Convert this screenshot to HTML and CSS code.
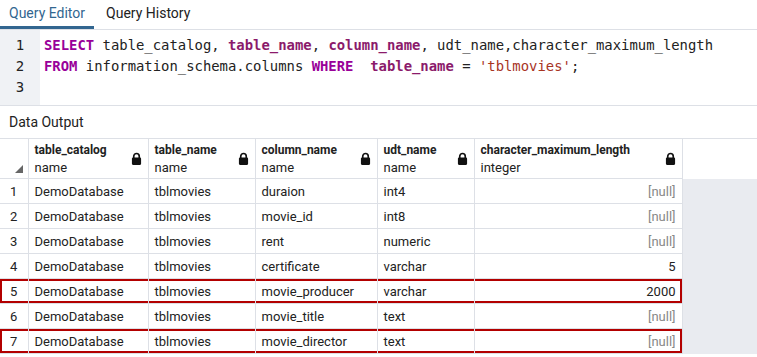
FILE: index.html
```html
<!DOCTYPE html>
<html lang="en">
<head>
    <meta charset="UTF-8">
    <title>Query Tool</title>
    <link rel="stylesheet" href="styles.css">
</head>
<body>
    <div class="tabs">
        <div class="tab active">Query Editor</div>
        <div class="tab">Query History</div>
    </div>

    <div class="editor">
        <div class="gutter">
            <div>1</div>
            <div>2</div>
            <div>3</div>
        </div>
        <div class="code">
            <div><span class="kw">SELECT</span> table_catalog, <span class="id">table_name</span>, <span class="id">column_name</span>, udt_name,character_maximum_length</div>
            <div><span class="kw">FROM</span> information_schema.columns <span class="kw">WHERE</span>  <span class="id">table_name</span> = <span class="str">'tblmovies'</span>;</div>
            <div> </div>
        </div>
    </div>

    <div class="panel-title">Data Output</div>

    <table class="grid">
        <colgroup>
            <col style="width: 28px">
            <col style="width: 120px">
            <col style="width: 107px">
            <col style="width: 122px">
            <col style="width: 97px">
            <col style="width: 208px">
            <col>
        </colgroup>
        <thead>
            <tr>
                <th class="corner"><span class="sort"></span></th>
                <th><div class="head"><div><b>table_catalog</b><span>name</span></div><svg class="lock" viewBox="0 0 12 14"><path d="M3 6.5V4.5a3 3 0 0 1 6 0v2" fill="none" stroke="#111" stroke-width="1.8"/><rect x="1" y="6" width="10" height="8" rx="1.2" fill="#111"/></svg></div></th>
                <th><div class="head"><div><b>table_name</b><span>name</span></div><svg class="lock" viewBox="0 0 12 14"><path d="M3 6.5V4.5a3 3 0 0 1 6 0v2" fill="none" stroke="#111" stroke-width="1.8"/><rect x="1" y="6" width="10" height="8" rx="1.2" fill="#111"/></svg></div></th>
                <th><div class="head"><div><b>column_name</b><span>name</span></div><svg class="lock" viewBox="0 0 12 14"><path d="M3 6.5V4.5a3 3 0 0 1 6 0v2" fill="none" stroke="#111" stroke-width="1.8"/><rect x="1" y="6" width="10" height="8" rx="1.2" fill="#111"/></svg></div></th>
                <th><div class="head"><div><b>udt_name</b><span>name</span></div><svg class="lock" viewBox="0 0 12 14"><path d="M3 6.5V4.5a3 3 0 0 1 6 0v2" fill="none" stroke="#111" stroke-width="1.8"/><rect x="1" y="6" width="10" height="8" rx="1.2" fill="#111"/></svg></div></th>
                <th><div class="head"><div><b>character_maximum_length</b><span>integer</span></div><svg class="lock" viewBox="0 0 12 14"><path d="M3 6.5V4.5a3 3 0 0 1 6 0v2" fill="none" stroke="#111" stroke-width="1.8"/><rect x="1" y="6" width="10" height="8" rx="1.2" fill="#111"/></svg></div></th>
                <th class="filler"></th>
            </tr>
        </thead>
        <tbody>
            <tr><td class="num">1</td><td>DemoDatabase</td><td>tblmovies</td><td>duraion</td><td>int4</td><td class="right null">[null]</td><td class="filler"></td></tr>
            <tr><td class="num">2</td><td>DemoDatabase</td><td>tblmovies</td><td>movie_id</td><td>int8</td><td class="right null">[null]</td><td class="filler"></td></tr>
            <tr><td class="num">3</td><td>DemoDatabase</td><td>tblmovies</td><td>rent</td><td>numeric</td><td class="right null">[null]</td><td class="filler"></td></tr>
            <tr><td class="num">4</td><td>DemoDatabase</td><td>tblmovies</td><td>certificate</td><td>varchar</td><td class="right">5</td><td class="filler"></td></tr>
            <tr class="marked"><td class="num">5</td><td>DemoDatabase</td><td>tblmovies</td><td>movie_producer</td><td>varchar</td><td class="right">2000</td><td class="filler"></td></tr>
            <tr><td class="num">6</td><td>DemoDatabase</td><td>tblmovies</td><td>movie_title</td><td>text</td><td class="right null">[null]</td><td class="filler"></td></tr>
            <tr class="marked"><td class="num">7</td><td>DemoDatabase</td><td>tblmovies</td><td>movie_director</td><td>text</td><td class="right null">[null]</td><td class="filler"></td></tr>
        </tbody>
    </table>
</body>
</html>
```

FILE: styles.css
```css
body {
    margin: 0;
    font-family: Roboto, "Liberation Sans", sans-serif;
    color: #222;
    background: #fff;
    overflow: hidden;
}
.tabs {
    display: flex;
    height: 29px;
    border-bottom: 1px solid #dde0e6;
}
.tab {
    padding: 0 12px;
    font-size: 14px;
    line-height: 26px;
    color: #222;
    white-space: nowrap;
}
.tab.active {
    padding: 0 9px;
    color: #326690;
    border-bottom: 3px solid #326690;
}
.editor {
    display: flex;
    height: 75px;
    border-bottom: 1px solid #dde0e6;
    font-family: "DejaVu Sans Mono", monospace;
    font-size: 14px;
    line-height: 21px;
}
.gutter {
    width: 40px;
    padding-top: 5px;
    background: #f0f2f5;
    text-align: center;
    color: #222;
}
.code {
    padding: 5px 0 0 4px;
    color: #222;
    font-size: 13.9px;
}
.code div {
    white-space: pre;
    height: 21px;
}
.kw {
    color: #990099;
    font-weight: bold;
}
.id {
    color: #8b1a6b;
    font-weight: bold;
}
.str {
    color: #a8341f;
}
.panel-title {
    height: 32px;
    line-height: 32px;
    padding-left: 9px;
    font-size: 14px;
}
.grid {
    width: 100%;
    border-collapse: collapse;
    table-layout: fixed;
    font-size: 13px;
    border-top: 1px solid #dde0e6;
}
.grid th, .grid td {
    border: 1px solid #dde0e6;
    padding: 0 6px;
    text-align: left;
    white-space: nowrap;
    overflow: hidden;
}
.grid th {
    height: 39px;
    font-weight: normal;
    background: #fff;
}
.grid td {
    height: 24px;
    background: #fff;
}
.grid th:first-child, .grid td:first-child {
    border-left: none;
}
.grid .filler {
    border: none;
    border-left: 1px solid #dde0e6;
}
.grid th.filler {
    border-top: 1px solid #dde0e6;
}
.grid td.filler {
    background: #e9ebf0;
}
.head {
    display: flex;
    align-items: center;
    justify-content: space-between;
}
.head b {
    display: block;
    font-size: 12px;
    font-weight: bold;
    line-height: 17px;
}
.head span {
    display: block;
    font-size: 13px;
    line-height: 17px;
}
.lock {
    width: 11px;
    height: 13px;
    flex-shrink: 0;
}
.corner {
    position: relative;
}
.sort {
    position: absolute;
    left: 15px;
    bottom: 5px;
    width: 0;
    height: 0;
    border-left: 8px solid transparent;
    border-bottom: 8px solid #666;
}
.num {
    text-align: center !important;
    padding: 0 !important;
}
.right {
    text-align: right !important;
}
.null {
    color: #888;
}
.marked td {
    box-shadow: inset 0 2px 0 #b30000, inset 0 -2px 0 #b30000;
}
.marked td:first-child {
    box-shadow: inset 2px 0 0 #b30000, inset 0 2px 0 #b30000, inset 0 -2px 0 #b30000;
}
.marked td.right {
    box-shadow: inset -2px 0 0 #b30000, inset 0 2px 0 #b30000, inset 0 -2px 0 #b30000;
}
.marked td.filler {
    box-shadow: none;
}
```
